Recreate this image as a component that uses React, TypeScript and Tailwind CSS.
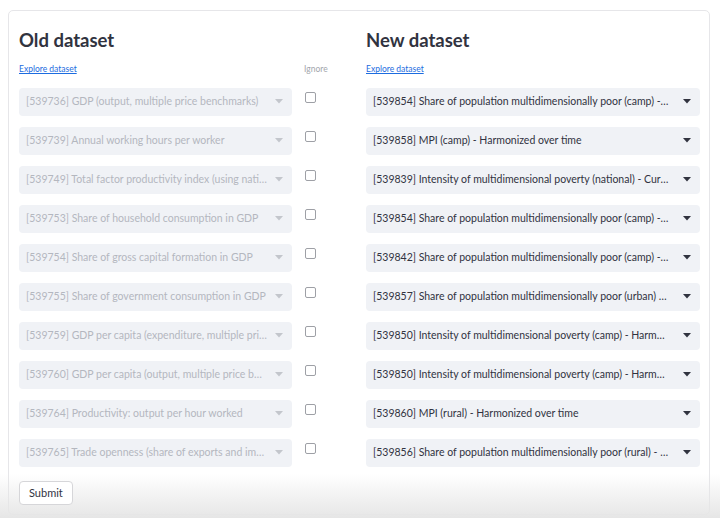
import { useState } from 'react';

const rows = [
    {
        old: '[539736] GDP (output, multiple price benchmarks)',
        neu: '[539854] Share of population multidimensionally poor (camp) - Harmonized over time',
    },
    { old: '[539739] Annual working hours per worker', neu: '[539858] MPI (camp) - Harmonized over time' },
    {
        old: '[539749] Total factor productivity index (using national accounts)',
        neu: '[539839] Intensity of multidimensional poverty (national) - Current margin',
    },
    {
        old: '[539753] Share of household consumption in GDP',
        neu: '[539854] Share of population multidimensionally poor (camp) - Harmonized over time',
    },
    {
        old: '[539754] Share of gross capital formation in GDP',
        neu: '[539842] Share of population multidimensionally poor (camp) - Current margin',
    },
    {
        old: '[539755] Share of government consumption in GDP',
        neu: '[539857] Share of population multidimensionally poor (urban) - Harmonized over time',
    },
    {
        old: '[539759] GDP per capita (expenditure, multiple price benchmarks)',
        neu: '[539850] Intensity of multidimensional poverty (camp) - Harmonized over time',
    },
    {
        old: '[539760] GDP per capita (output, multiple price benchmarks)',
        neu: '[539850] Intensity of multidimensional poverty (camp) - Harmonized over time',
    },
    { old: '[539764] Productivity: output per hour worked', neu: '[539860] MPI (rural) - Harmonized over time' },
    {
        old: '[539765] Trade openness (share of exports and imports in GDP)',
        neu: '[539856] Share of population multidimensionally poor (rural) - Harmonized over time',
    },
];

const Caret = ({ disabled }: { disabled?: boolean }) => (
    <svg width="8" height="5" viewBox="0 0 8 5" className="shrink-0">
        <path d="M0 0 L8 0 L4 4.5 Z" fill={disabled ? '#c3c6cc' : '#31333f'} />
    </svg>
);

const Select = ({ label, disabled }: { label: string; disabled?: boolean }) => (
    <div
        className={`flex h-[28px] items-center rounded-[4px] bg-[#f0f2f6] pl-[7px] pr-[9px] ${disabled ? 'gap-[8px]' : 'gap-[14px]'}`}
    >
        <span
            className={`min-w-0 flex-1 truncate text-[10.5px] ${disabled ? 'text-[#b4b7bf]' : 'text-[#31333f]'}`}
        >
            {label}
        </span>
        <Caret disabled={disabled} />
    </div>
);

export default function App() {
    const [ignored, setIgnored] = useState<boolean[]>(rows.map(() => false));

    return (
        <div className="relative h-[518px] w-[720px] overflow-hidden bg-white font-['Lato',sans-serif] text-[#31333f]">
            <div className="ml-[8px] mt-[10px] h-[505px] w-[702px] rounded-[5px] border border-[#e6e6e9] px-[10px] pt-[16px]">
                <div className="grid grid-cols-[273px_50px_334px] gap-x-3">
                    <h2 className="text-[18.5px] font-bold leading-[26px]">Old dataset</h2>
                    <div />
                    <h2 className="text-[18.5px] font-bold leading-[26px]">New dataset</h2>

                    <a href="#" className="mt-[10px] text-[8.5px] text-[#1c6ce0] underline">
                        Explore dataset
                    </a>
                    <span className="mt-[10px] text-[8.5px] text-[#a3a6ad]">Ignore</span>
                    <a href="#" className="mt-[10px] text-[8.5px] text-[#1c6ce0] underline">
                        Explore dataset
                    </a>
                </div>

                <div className="mt-[12px] flex flex-col gap-[11px]">
                    {rows.map((r, i) => (
                        <div key={i} className="grid grid-cols-[273px_50px_334px] gap-x-3">
                            <Select label={r.old} disabled />
                            <div className="pl-[1px] pt-[4px]">
                                <button
                                    onClick={() => setIgnored(ignored.map((v, j) => (j === i ? !v : v)))}
                                    className={`block h-[11px] w-[11px] rounded-[2px] border ${ignored[i] ? 'border-[#ff4b4b] bg-[#ff4b4b]' : 'border-[#9ea0a6] bg-white'}`}
                                />
                            </div>
                            <Select label={r.neu} />
                        </div>
                    ))}
                </div>

                <button className="relative z-10 mt-[14px] h-[24px] rounded-[4px] border border-[#d6d6d9] bg-white px-[9px] text-[11px] text-[#31333f]">
                    Submit
                </button>
            </div>
            <div className="pointer-events-none absolute bottom-0 left-0 h-[44px] w-full bg-gradient-to-b from-transparent to-[#e6e6e6]" />
        </div>
    );
}
